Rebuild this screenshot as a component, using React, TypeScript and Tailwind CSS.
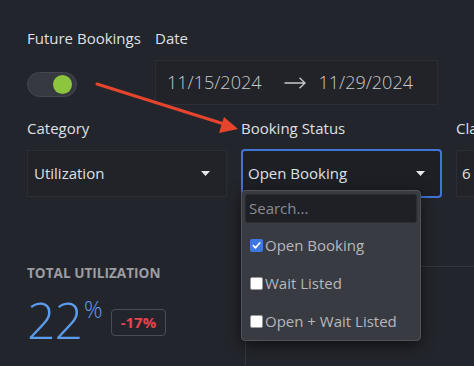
const options = [
  { label: "Open Booking", checked: true },
  { label: "Wait Listed", checked: false },
  { label: "Open + Wait Listed", checked: false },
];

function Caret() {
  return (
    <svg width="9" height="5" viewBox="0 0 9 5" className="shrink-0">
      <path d="M0 0h9L4.5 5z" fill="#e6e7ea" />
    </svg>
  );
}

function Checkbox({ checked }: { checked: boolean }) {
  if (checked) {
    return (
      <span className="flex h-[13px] w-[13px] shrink-0 items-center justify-center rounded-[2px] bg-[#3c78e0]">
        <svg width="9" height="9" viewBox="0 0 10 10">
          <path d="M1.5 5.2l2.3 2.4L8.6 2.2" stroke="#fff" strokeWidth="1.8" fill="none" strokeLinecap="round" strokeLinejoin="round" />
        </svg>
      </span>
    );
  }
  return <span className="h-[13px] w-[13px] shrink-0 rounded-[2px] border border-[#9a9a9a] bg-white" />;
}

export default function App() {
  return (
    <div className="relative h-[366px] w-[474px] overflow-hidden bg-[#23252c] font-['Open_Sans',sans-serif] text-[#dfe0e3]">
      <div className="pl-[27px] pt-[28px]">
        {/* top row */}
        <div className="flex">
          <div className="w-[128px]">
            <div className="text-[15px] leading-[20px]">Future Bookings</div>
            <div className="mt-[24px] flex h-[25px] w-[50px] items-center justify-end rounded-full border border-[#44474f] bg-[#363940] pr-[4px]">
              <span className="h-[19px] w-[19px] rounded-full bg-[#8cc63f]" />
            </div>
          </div>
          <div>
            <div className="text-[15px] leading-[20px]">Date</div>
            <div className="mt-[12px] flex h-[45px] w-[283px] items-center border border-[#2b2e35] bg-[#212329] pl-[11px] text-[18px] font-light text-[#c9cacd]">
              <span>11/15/2024</span>
              <svg width="22" height="12" viewBox="0 0 22 12" className="ml-[23px] mr-[12px] shrink-0">
                <path d="M0.5 6H21M15.5 0.8L21 6l-5.5 5.2" stroke="#c9cacd" strokeWidth="1.3" fill="none" />
              </svg>
              <span>11/29/2024</span>
            </div>
          </div>
        </div>

        {/* filters row */}
        <div className="mt-[13px] flex gap-[14px]">
          <div className="w-[200px] shrink-0">
            <div className="text-[15px] leading-[20px]">Category</div>
            <div className="mt-[12px] flex h-[47px] items-center justify-between border border-[#2b2e35] bg-[#212329] pl-[6px] pr-[16px] text-[15px]">
              <span>Utilization</span>
              <Caret />
            </div>
          </div>
          <div className="w-[201px] shrink-0">
            <div className="text-[15px] leading-[20px]">Booking Status</div>
            <div className="mt-[11px] flex h-[49px] items-center justify-between rounded-[4px] border-2 border-[#4273d6] bg-[#1d1f25] pl-[5px] pr-[15px] text-[15px]">
              <span>Open Booking</span>
              <Caret />
            </div>
          </div>
          <div className="w-[120px] shrink-0">
            <div className="text-[15px] leading-[20px]">Class</div>
            <div className="mt-[12px] flex h-[47px] items-center border border-[#2b2e35] bg-[#212329] pl-[5px] text-[15px]">
              <span>6 Weeks</span>
            </div>
          </div>
        </div>

        {/* lower section */}
        <div className="mt-[67px] flex">
          <div className="w-[218px] shrink-0">
            <div className="text-[13.6px] font-bold uppercase leading-[16px] text-[#9b9da3]">Total Utilization</div>
            <div className="mt-[14px] flex items-start">
              <span className="text-[50px] font-light leading-[50px] tracking-[-1px] text-[#5c9cec]">22</span>
              <span className="ml-[2px] mt-[2px] text-[23px] font-light leading-[24px] text-[#5c9cec]">%</span>
              <span className="ml-[8px] mt-[14px] rounded-[4px] border border-[#4a4d55] px-[9px] py-[2px] text-[15px] font-bold leading-[21px] text-[#e5434f]">-17%</span>
            </div>
          </div>
          <div className="mt-[1px] h-[120px] flex-1 border-l border-t border-[#33363d]" />
        </div>
      </div>

      {/* annotation arrow */}
      <svg className="pointer-events-none absolute left-0 top-0" width="474" height="366">
        <line x1="97" y1="84" x2="224" y2="124" stroke="#e5452d" strokeWidth="3" strokeLinecap="round" />
        <polygon points="238,129 219,133 224,117" fill="#e5452d" />
      </svg>

      {/* dropdown */}
      <div className="absolute left-[241px] top-[190px] w-[180px] rounded-[4px] border border-[#4f525a] bg-[#393b43] px-[3px] pt-[3px] shadow-[0_4px_14px_rgba(0,0,0,0.55)]">
        <div className="flex h-[29px] items-center rounded-[3px] border border-[#2a2c32] bg-[#1e2026] pl-[3px] text-[15px] text-[#8a8c92]">
          Search...
        </div>
        <div className="pl-[5px] pt-[3px]">
          {options.map((o) => (
            <div key={o.label} className="flex h-[38px] items-center gap-[2px] text-[15px] text-[#b5b7bc]">
              <Checkbox checked={o.checked} />
              <span>{o.label}</span>
            </div>
          ))}
        </div>
      </div>
    </div>
  );
}
